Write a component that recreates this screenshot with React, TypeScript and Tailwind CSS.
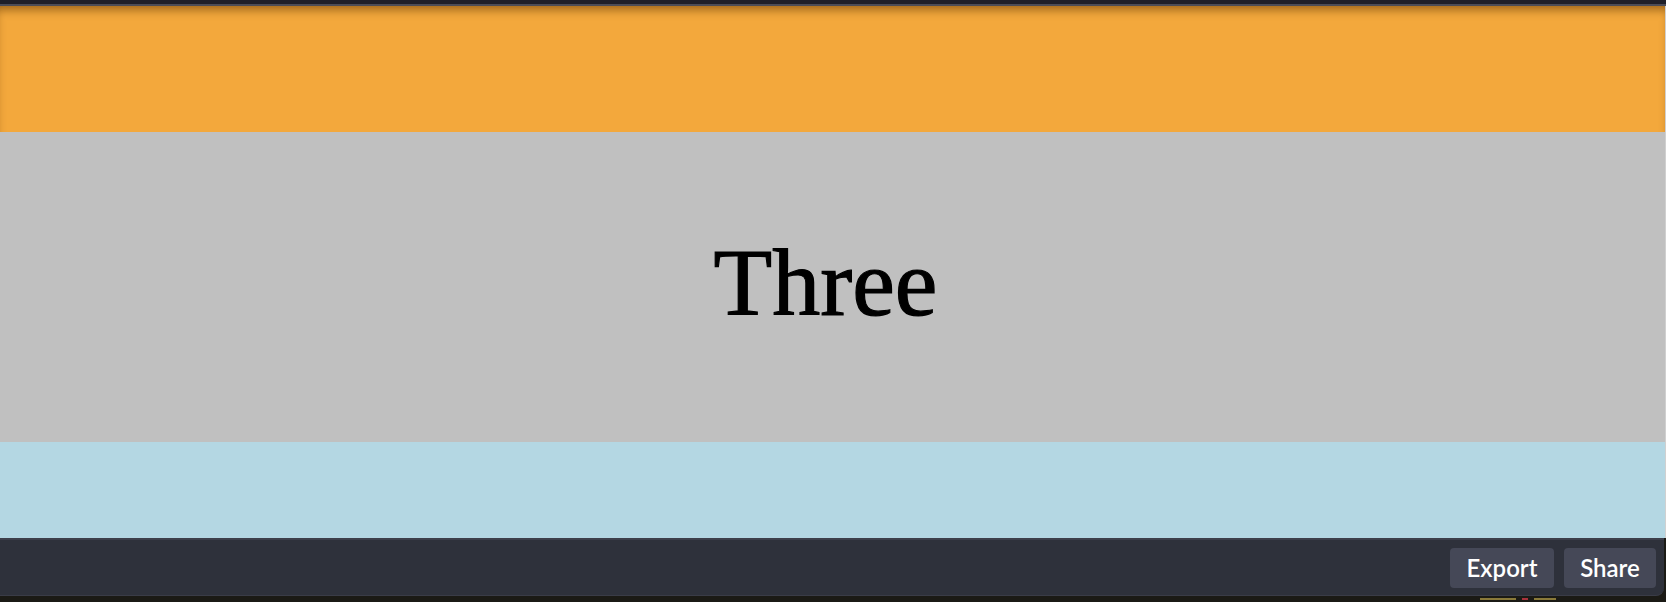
import React from "react";

const App = () => {
  return (
    <div className="w-[1666px] h-[602px] flex flex-col bg-[#1b1a15] overflow-hidden">
      {/* top strip */}
      <div className="h-[4px] bg-[#1e1f29]" />
      <div className="h-[2px] bg-[#4b4c57]" />

      {/* panels */}
      <div className="flex flex-col pr-[1px] bg-[#d0d0d0]">
        <div className="h-[126px] bg-[#f3a83c] shadow-[inset_0_8px_10px_-4px_rgba(90,50,0,0.55)]" />
        <div className="h-[310px] bg-[#c0c0c0] flex items-center justify-center pr-[14px]">
          <span className="text-[96px] leading-none text-black font-['Liberation_Serif','Times_New_Roman',serif] -mt-[8px] [-webkit-text-stroke:1.2px_black]">
            Three
          </span>
        </div>
        <div className="h-[96px] bg-[#b4d7e3]" />
      </div>

      {/* bottom toolbar */}
      <div className="h-[58px] mr-[2px] bg-[#2e313b] border-t-2 border-[#3d3f4b] border-b border-b-[#3a3c47] rounded-br-[8px] flex items-center justify-end gap-[10px] pr-[8px] font-['Lato','Noto_Sans',sans-serif]">
        <button className="h-[40px] w-[104px] rounded-[4px] bg-[#454857] text-white text-[24px] font-semibold leading-none">
          Export
        </button>
        <button className="h-[40px] w-[92px] rounded-[4px] bg-[#454857] text-white text-[24px] font-semibold leading-none">
          Share
        </button>
      </div>

      {/* bit of content peeking below */}
      <div className="flex-1 flex items-start justify-end pr-[110px] gap-[6px] pt-[2px]">
        <div className="h-[2px] w-[36px] bg-[#8a7a3a]" />
        <div className="h-[2px] w-[6px] bg-[#a8323c]" />
        <div className="h-[2px] w-[22px] bg-[#8a7a3a]" />
      </div>
    </div>
  );
};

export default App;
